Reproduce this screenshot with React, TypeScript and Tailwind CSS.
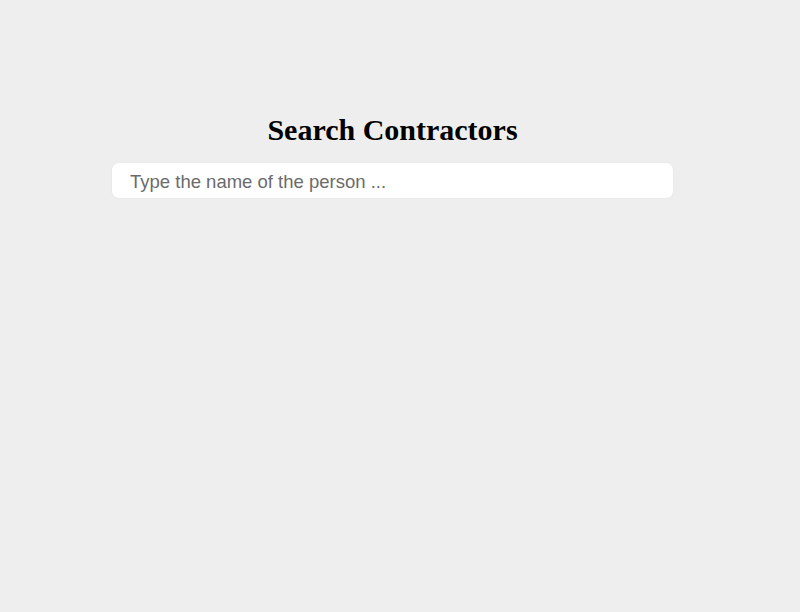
export default function App() {
  return (
    <main className="min-h-[612px] bg-[#eeeeee] pr-[15px]">
      <div className="flex flex-col items-center pt-[112px]">
        <h1 className="font-['Liberation_Serif',serif] text-[30px] font-bold leading-[36px] text-black">
          Search Contractors
        </h1>
        <input
          type="text"
          placeholder="Type the name of the person ..."
          className="mt-[14px] h-[37px] w-[563px] rounded-[8px] border border-[#eaeaea] bg-white px-[18px] pt-[3px] font-['Liberation_Sans',Arial,sans-serif] text-[18.5px] text-[#333] outline-none placeholder:text-[#6b6b6b]"
        />
      </div>
    </main>
  );
}
